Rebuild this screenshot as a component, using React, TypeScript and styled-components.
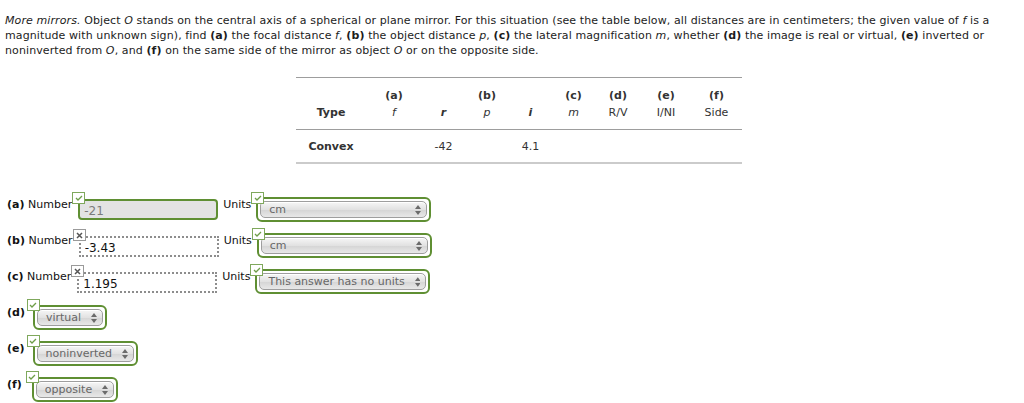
import React from "react";
import styled, { createGlobalStyle, css } from "styled-components";

const GlobalStyle = createGlobalStyle`
  body {
    margin: 0;
    background: #fff;
    font-family: "DejaVu Sans", Verdana, sans-serif;
    font-size: 11px;
    color: #1c1c1c;
  }
`;

const GREEN = "#5f8f33";

const Page = styled.div`
  padding: 13px 5px 0 5px;
`;

const Question = styled.p`
  margin: 0;
  width: 1000px;
  line-height: 15px;
  letter-spacing: 0.1px;
`;

const Table = styled.table`
  border-collapse: collapse;
  table-layout: fixed;
  width: 446px;
  margin: 19px 0 0 291px;
  color: #333;
  font-size: 11px;
`;

const HeadCell = styled.th<{ $w: number }>`
  width: ${(p) => p.$w}px;
  padding: 9px 0 8px;
  border-top: 1px solid #9d9d9d;
  border-bottom: 1px solid #9d9d9d;
  font-weight: normal;
  text-align: center;
  vertical-align: bottom;
  line-height: 17px;
`;

const HeadLine = styled.span<{ $bold?: boolean; $italic?: boolean }>`
  display: block;
  font-weight: ${(p) => (p.$bold ? "bold" : "normal")};
  font-style: ${(p) => (p.$italic ? "italic" : "normal")};
`;

const BodyCell = styled.td<{ $bold?: boolean }>`
  padding: 9px 0 8px;
  line-height: 15px;
  text-align: center;
  border-bottom: 2px solid #cbcbcb;
  font-weight: ${(p) => (p.$bold ? "bold" : "normal")};
`;

const AnswerList = styled.div`
  display: flex;
  flex-direction: column;
  margin-top: 33px;
  padding-left: 2px;
`;

const Row = styled.div`
  display: flex;
  align-items: flex-start;
  height: 36px;
`;

const Label = styled.span<{ $gap?: number }>`
  line-height: 16px;
  color: #111;
  margin-right: ${(p) => p.$gap ?? 6}px;
  white-space: nowrap;
  b {
    font-weight: bold;
  }
`;

const UnitsLabel = styled.span`
  line-height: 15px;
  color: #111;
  margin: 0 5px 0 5px;
`;

const Field = styled.span<{ $offset?: number }>`
  position: relative;
  display: inline-flex;
  margin-top: ${(p) => p.$offset || 0}px;
`;

type Mark = "check" | "cross";

const Badge = styled.span<{ $mark: Mark; $left?: number; $top?: number }>`
  position: absolute;
  left: ${(p) => p.$left ?? -6}px;
  top: ${(p) => p.$top ?? -7}px;
  z-index: 2;
  box-sizing: border-box;
  width: 13px;
  height: 12px;
  display: flex;
  align-items: flex-start;
  justify-content: center;
  padding-top: 2px;
  background: #fff;
  border: 1px solid ${(p) => (p.$mark === "check" ? "#7fa85c" : "#9a9a9a")};
`;

const NumberInput = styled.input<{ $status: "correct" | "wrong" }>`
  box-sizing: border-box;
  width: 140px;
  height: 21px;
  margin: 0;
  padding: 2px 4px 0;
  font-family: "DejaVu Sans", Verdana, sans-serif;
  font-size: 12px;
  outline: none;
  ${(p) =>
    p.$status === "correct"
      ? css`
          border: 2px solid ${GREEN};
          border-radius: 4px;
          background: #e3e3e3;
          color: #7b7b7b;
        `
      : css`
          border: 2px dotted #8d8d8d;
          border-radius: 0;
          background: #fff;
          color: #111;
        `}
`;

const Outline = styled.span`
  display: inline-flex;
  padding: 2px;
  border: 2px solid ${GREEN};
  border-radius: 6px;
  background: #fff;
`;

const SelectFace = styled.span<{ $width?: number }>`
  box-sizing: border-box;
  display: inline-flex;
  align-items: center;
  justify-content: space-between;
  gap: 10px;
  height: 17px;
  width: ${(p) => (p.$width ? `${p.$width}px` : "auto")};
  padding: 0 5px 0 8px;
  border: 1px solid #9e9e9e;
  border-radius: 5px;
  background: linear-gradient(#f6f6f6, #e2e2e2 50%, #d6d6d6 55%, #e8e8e8);
  box-shadow: inset 0 1px 0 #fff;
  color: #676767;
  font-size: 11px;
  white-space: nowrap;
`;

const CheckIcon = () => (
  <svg width="8" height="6" viewBox="0 0 8 6">
    <path d="M1 3 L3 5 L7 1" fill="none" stroke="#6e9e48" strokeWidth="1.3" />
  </svg>
);

const CrossIcon = () => (
  <svg width="7" height="7" viewBox="0 0 7 7">
    <path d="M1 1 L6 6 M6 1 L1 6" fill="none" stroke="#555" strokeWidth="1.5" />
  </svg>
);

const Arrows = () => (
  <svg width="6" height="10" viewBox="0 0 6 10">
    <path d="M0 4 L3 0 L6 4 Z M0 6 L6 6 L3 10 Z" fill="#6b6b6b" />
  </svg>
);

const Mark = ({ mark, left, top }: { mark: Mark; left?: number; top?: number }) => (
  <Badge $mark={mark} $left={left} $top={top}>
    {mark === "check" ? <CheckIcon /> : <CrossIcon />}
  </Badge>
);

const Select = ({ text, width }: { text: string; width?: number }) => (
  <Outline>
    <SelectFace $width={width}>
      <span>{text}</span>
      <Arrows />
    </SelectFace>
  </Outline>
);

const columns = [
  { w: 70, top: "", bottom: "Type", bold: true, italic: false },
  { w: 56, top: "(a)", bottom: "f", bold: false, italic: true },
  { w: 43, top: "", bottom: "r", bold: true, italic: true },
  { w: 44, top: "(b)", bottom: "p", bold: false, italic: true },
  { w: 43, top: "", bottom: "i", bold: true, italic: true },
  { w: 43, top: "(c)", bottom: "m", bold: false, italic: true },
  { w: 46, top: "(d)", bottom: "R/V", bold: false, italic: false },
  { w: 50, top: "(e)", bottom: "I/NI", bold: false, italic: false },
  { w: 51, top: "(f)", bottom: "Side", bold: false, italic: false },
];

const values = ["Convex", "", "-42", "", "4.1", "", "", "", ""];

const numberRows = [
  { key: "a", value: "-21", status: "correct" as const, unit: "cm", offset: 2 },
  { key: "b", value: "-3.43", status: "wrong" as const, unit: "cm", offset: 3 },
  { key: "c", value: "1.195", status: "wrong" as const, unit: "This answer has no units", offset: 3 },
];

const choiceRows = [
  { key: "d", value: "virtual" },
  { key: "e", value: "noninverted" },
  { key: "f", value: "opposite" },
];

export default function App() {
  return (
    <Page>
      <GlobalStyle />
      <Question>
        <i>More mirrors.</i> Object <i>O</i> stands on the central axis of a spherical or plane mirror. For this
        situation (see the table below, all distances are in centimeters; the given value of <i>f</i> is a magnitude
        with unknown sign), find <b>(a)</b> the focal distance <i>f</i>, <b>(b)</b> the object distance <i>p</i>,{" "}
        <b>(c)</b> the lateral magnification <i>m</i>, whether <b>(d)</b> the image is real or virtual, <b>(e)</b>{" "}
        inverted or noninverted from <i>O</i>, and <b>(f)</b> on the same side of the mirror as object <i>O</i> or on
        the opposite side.
      </Question>

      <Table>
        <thead>
          <tr>
            {columns.map((c, i) => (
              <HeadCell key={i} $w={c.w}>
                {c.top && <HeadLine $bold>{c.top}</HeadLine>}
                <HeadLine $bold={c.bold} $italic={c.italic}>
                  {c.bottom}
                </HeadLine>
              </HeadCell>
            ))}
          </tr>
        </thead>
        <tbody>
          <tr>
            {values.map((v, i) => (
              <BodyCell key={i} $bold={i === 0}>
                {v}
              </BodyCell>
            ))}
          </tr>
        </tbody>
      </Table>

      <AnswerList>
        {numberRows.map((r) => (
          <Row key={r.key}>
            <Label>
              <b>({r.key})</b> Number
            </Label>
            <Field $offset={r.offset}>
              <Mark mark={r.status === "correct" ? "check" : "cross"} />
              <NumberInput $status={r.status} readOnly value={r.value} />
            </Field>
            <UnitsLabel>Units</UnitsLabel>
            <Field>
              <Mark mark="check" left={-5} top={-5} />
              <Select text={r.unit} width={167} />
            </Field>
          </Row>
        ))}
        {choiceRows.map((r) => (
          <Row key={r.key}>
            <Label $gap={r.key === "f" ? 10 : 8}>
              <b>({r.key})</b>
            </Label>
            <Field>
              <Mark mark="check" left={-6} top={-6} />
              <Select text={r.value} />
            </Field>
          </Row>
        ))}
      </AnswerList>
    </Page>
  );
}
